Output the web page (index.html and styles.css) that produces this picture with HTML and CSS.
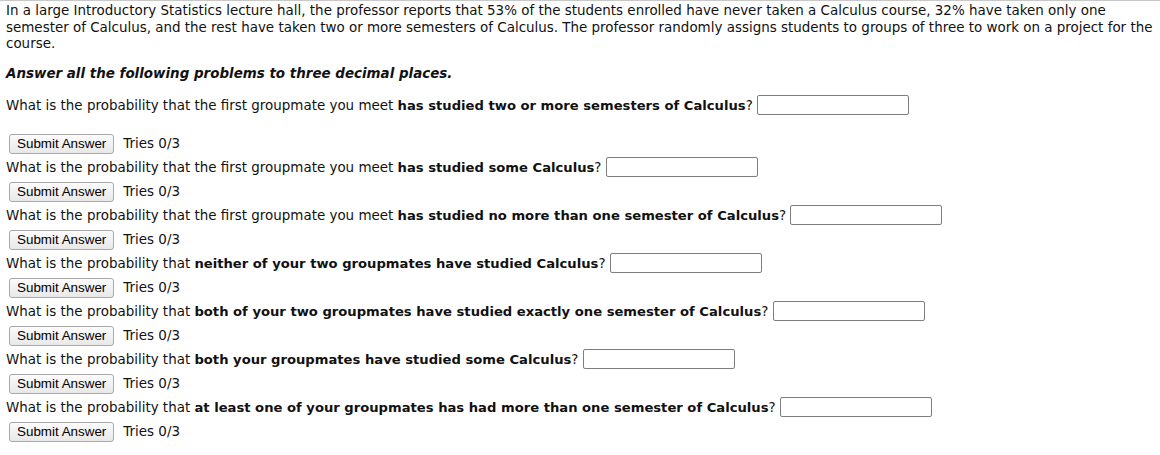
FILE: index.html
```html
<!DOCTYPE html>
<html>
<head>
<meta charset="utf-8">
<link rel="stylesheet" href="styles.css">
</head>
<body>
<div class="page">
<p class="intro">In a large Introductory Statistics lecture hall, the professor reports that 53% of the students enrolled have never taken a Calculus course, 32% have taken only one semester of Calculus, and the rest have taken two or more semesters of Calculus. The professor randomly assigns students to groups of three to work on a project for the course.</p>
<p class="note">Answer all the following problems to three decimal places.</p>
<div class="q first">What is the probability that the first groupmate you meet <b>has studied two or more semesters of Calculus</b>? <input class="ans" type="text"></div>
<div class="sub gap"><button class="btn">Submit Answer</button><span class="tries">Tries 0/3</span></div>
<div class="q">What is the probability that the first groupmate you meet <b>has studied some Calculus</b>? <input class="ans" type="text"></div>
<div class="sub"><button class="btn">Submit Answer</button><span class="tries">Tries 0/3</span></div>
<div class="q">What is the probability that the first groupmate you meet <b>has studied no more than one semester of Calculus</b>? <input class="ans" type="text"></div>
<div class="sub"><button class="btn">Submit Answer</button><span class="tries">Tries 0/3</span></div>
<div class="q">What is the probability that <b>neither of your two groupmates have studied Calculus</b>? <input class="ans" type="text"></div>
<div class="sub"><button class="btn">Submit Answer</button><span class="tries">Tries 0/3</span></div>
<div class="q">What is the probability that <b>both of your two groupmates have studied exactly one semester of Calculus</b>? <input class="ans" type="text"></div>
<div class="sub"><button class="btn">Submit Answer</button><span class="tries">Tries 0/3</span></div>
<div class="q">What is the probability that <b>both your groupmates have studied some Calculus</b>? <input class="ans" type="text"></div>
<div class="sub"><button class="btn">Submit Answer</button><span class="tries">Tries 0/3</span></div>
<div class="q">What is the probability that <b>at least one of your groupmates has had more than one semester of Calculus</b>? <input class="ans" type="text"></div>
<div class="sub"><button class="btn">Submit Answer</button><span class="tries">Tries 0/3</span></div>
</div>
</body>
</html>
```
FILE: styles.css
```css
html, body {
  margin: 0;
  padding: 0;
  background: #fff;
}
.page {
  border-top: 1px solid #c8c8c8;
  padding: 0 6px;
  font-family: "DejaVu Sans", Verdana, sans-serif;
  font-size: 13.45px;
  color: #111;
}
.intro {
  margin: 0;
  padding-top: 2px;
  line-height: 16.5px;
}
.note {
  margin: 13px 0 0 0;
  font-weight: bold;
  font-style: italic;
  line-height: 16px;
}
.q {
  height: 24px;
  box-sizing: border-box;
  padding: 1px 0;
  line-height: 22px;
  white-space: nowrap;
}
.q.first {
  margin-top: 12px;
}
.q b {
  font-size: 13.15px;
}
.ans {
  width: 152px;
  height: 20px;
  box-sizing: border-box;
  vertical-align: middle;
  margin: 0 0 1px 0;
  border: 1px solid #7e7e7e;
  border-radius: 2px;
  padding: 0 3px;
  font-size: 13px;
}
.sub {
  height: 24px;
  display: flex;
  align-items: center;
}
.sub.gap {
  margin-top: 14px;
}
.btn {
  margin-left: 3px;
  height: 20px;
  box-sizing: border-box;
  padding: 0 7px;
  font-family: "Liberation Sans", Arial, sans-serif;
  font-size: 13.4px;
  color: #000;
  background: linear-gradient(#fbfbfb, #e8e8e8);
  border: 1px solid #a9a9a9;
  border-radius: 3px;
}
.tries {
  margin-left: 9px;
}
```
